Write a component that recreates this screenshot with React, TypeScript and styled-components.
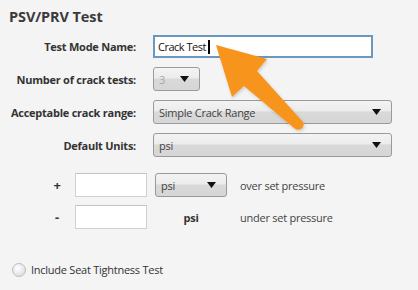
import React from 'react';
import styled, { createGlobalStyle } from 'styled-components';

const GlobalStyle = createGlobalStyle`
  html, body {
    margin: 0;
    padding: 0;
    background: #f4f4f4;
  }
  body {
    font-family: 'Open Sans', 'Noto Sans', sans-serif;
    color: #333;
  }
`;

const App: React.FC = () => {
  return (
    <>
      <GlobalStyle />
      <StyledPage>
        <StyledTitle>PSV/PRV Test</StyledTitle>
        <StyledForm>
          <StyledLabel>Test Mode Name:</StyledLabel>
          <StyledTextInput>
            Crack Test<StyledCaret />
          </StyledTextInput>

          <StyledLabel>Number of crack tests:</StyledLabel>
          <StyledSelect width={47} disabled>
            <span>3</span>
            <Caret />
          </StyledSelect>

          <StyledLabel>Acceptable crack range:</StyledLabel>
          <StyledSelect width={239}>
            <span>Simple Crack Range</span>
            <Caret />
          </StyledSelect>

          <StyledLabel>Default Units:</StyledLabel>
          <StyledSelect width={239}>
            <span>psi</span>
            <Caret />
          </StyledSelect>
        </StyledForm>

        <StyledPressure>
          <StyledSign>+</StyledSign>
          <StyledBox />
          <StyledSelect width={72}>
            <span>psi</span>
            <Caret />
          </StyledSelect>
          <StyledNote>over set pressure</StyledNote>

          <StyledSign>-</StyledSign>
          <StyledBox />
          <StyledUnit>psi</StyledUnit>
          <StyledNote>under set pressure</StyledNote>
        </StyledPressure>

        <StyledRadioRow>
          <StyledRadio />
          <span>Include Seat Tightness Test</span>
        </StyledRadioRow>

        <StyledArrow viewBox="0 0 418 290" aria-hidden>
          <defs>
            <filter id="arrowShadow" x="-20%" y="-20%" width="140%" height="140%">
              <feDropShadow dx="1" dy="1.5" stdDeviation="1.5" floodColor="#000" floodOpacity="0.18" />
            </filter>
          </defs>
          <path
            d="M216 45 L267 59 L257 71 L303 122 Q305 126 301 129 Q297 131 294 128 L244 86 L232 97 Z"
            fill="#f7941e"
            filter="url(#arrowShadow)"
          />
        </StyledArrow>
      </StyledPage>
    </>
  );
};

const Caret: React.FC = () => (
  <svg width="9" height="6" viewBox="0 0 9 6">
    <path d="M0 0 H9 L4.5 6 Z" fill="#111" />
  </svg>
);

const StyledPage = styled.div`
  position: relative;
  width: 418px;
  height: 290px;
  padding: 7px 0 0 9px;
  box-sizing: border-box;
  overflow: hidden;
  font-size: 11px;
  letter-spacing: -0.25px;
`;

const StyledTitle = styled.div`
  font-size: 14.5px;
  font-weight: 700;
  color: #3a3a3a;
  line-height: 20px;
  letter-spacing: -0.1px;
`;

const StyledForm = styled.div`
  display: grid;
  grid-template-columns: 127px auto;
  column-gap: 17px;
  row-gap: 9px;
  margin-top: 8px;
  align-items: center;
  justify-items: start;
`;

const StyledLabel = styled.div`
  justify-self: end;
  font-weight: 700;
  color: #333;
  white-space: nowrap;
`;

const StyledTextInput = styled.div`
  width: 220px;
  height: 23px;
  box-sizing: border-box;
  border: 2px solid #6b98bf;
  background: #fff;
  display: flex;
  align-items: center;
  padding-left: 3px;
  color: #111;
  letter-spacing: -0.5px;
`;

const StyledCaret = styled.span`
  display: inline-block;
  width: 2px;
  height: 14px;
  background: #000;
  margin-left: 2px;
`;

const StyledSelect = styled.div<{ width: number; disabled?: boolean }>`
  width: ${({ width }) => width}px;
  height: 24px;
  box-sizing: border-box;
  border: 1px solid #9a9a9a;
  border-radius: 3px;
  background: linear-gradient(to bottom, #f3f3f3 0%, #ececec 45%, #d9d9d9 50%, #d6d6d6 100%);
  display: flex;
  align-items: center;
  justify-content: space-between;
  padding: 0 10px 0 5px;
  color: ${({ disabled }) => (disabled ? '#a8a8a8' : '#444')};
`;

const StyledPressure = styled.div`
  display: grid;
  grid-template-columns: 20px 72px 72px auto;
  column-gap: 8px;
  row-gap: 8px;
  align-items: center;
  margin-top: 16px;
  margin-left: 38px;
`;

const StyledSign = styled.div`
  font-size: 13px;
  font-weight: 700;
  color: #333;
  text-align: center;
`;

const StyledBox = styled.div`
  width: 72px;
  height: 24px;
  box-sizing: border-box;
  border: 1px solid #cfcfcf;
  border-top-color: #c4c4c4;
  background: #fff;
`;

const StyledUnit = styled.div`
  font-weight: 700;
  color: #333;
  text-align: center;
`;

const StyledNote = styled.div`
  color: #444;
  margin-left: 5px;
`;

const StyledRadioRow = styled.div`
  display: flex;
  align-items: center;
  gap: 5px;
  margin-top: 33px;
  margin-left: 3px;
  color: #333;
`;

const StyledRadio = styled.span`
  width: 12px;
  height: 12px;
  border-radius: 50%;
  border: 1px solid #bdbdbd;
  background: radial-gradient(circle at 40% 35%, #ffffff 0%, #e6e6e6 60%, #cfcfcf 100%);
`;

const StyledArrow = styled.svg`
  position: absolute;
  left: 0;
  top: 0;
  width: 418px;
  height: 290px;
  pointer-events: none;
`;

export default App;
